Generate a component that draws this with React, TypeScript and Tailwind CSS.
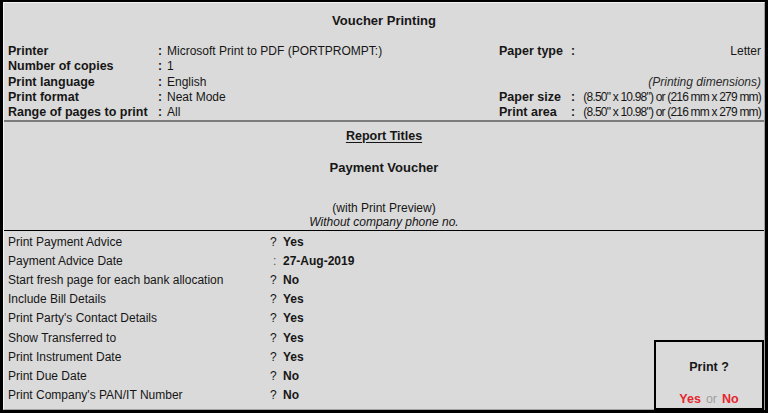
import React from 'react';

const topLeft = [
  { label: 'Printer', value: 'Microsoft Print to PDF (PORTPROMPT:)' },
  { label: 'Number of copies', value: '1' },
  { label: 'Print language', value: 'English' },
  { label: 'Print format', value: 'Neat Mode' },
  { label: 'Range of pages to print', value: 'All' },
];

const options = [
  { label: 'Print Payment Advice', sep: '?', value: 'Yes' },
  { label: 'Payment Advice Date', sep: ':', value: '27-Aug-2019' },
  { label: 'Start fresh page for each bank allocation', sep: '?', value: 'No' },
  { label: 'Include Bill Details', sep: '?', value: 'Yes' },
  { label: "Print Party's Contact Details", sep: '?', value: 'Yes' },
  { label: 'Show Transferred to', sep: '?', value: 'Yes' },
  { label: 'Print Instrument Date', sep: '?', value: 'Yes' },
  { label: 'Print Due Date', sep: '?', value: 'No' },
  { label: "Print Company's PAN/IT Number", sep: '?', value: 'No' },
];

const dims = '(8.50" x 10.98") or (216 mm x 279 mm)';

export default function App() {
  return (
    <div className="relative w-[768px] h-[413px] bg-[#dadada] border-black border-t-2 border-l-[3px] border-r-[3px] border-b-[3px] font-['Liberation_Sans',Arial,sans-serif] text-[#161616] overflow-hidden">
      <div className="h-full border border-[#a2a2a2] border-t-[#f4f4f4] border-l-[#f4f4f4] flex flex-col">
        {/* Printer settings */}
        <div className="h-[119px] shrink-0 border-b-2 border-[#7c7c7c] pt-[10px]">
          <div className="text-center font-bold text-[13px] leading-4">Voucher Printing</div>
          <div className="flex mt-[15px] pl-[4px] pr-[3px]">
            <div className="grid grid-cols-[150px_auto] auto-rows-[15.3px] items-center">
              {topLeft.map((r) => (
                <React.Fragment key={r.label}>
                  <div className="font-bold text-[12.5px] leading-[15px] whitespace-nowrap">{r.label}</div>
                  <div className="text-[12px] leading-[15px] whitespace-nowrap">
                    <span className="font-bold">:</span>
                    <span className="ml-[5px]">{r.value}</span>
                  </div>
                </React.Fragment>
              ))}
            </div>
            <div className="ml-auto w-[262px] grid grid-cols-[72px_1fr] auto-rows-[15.3px] items-center">
              <div className="font-bold text-[12.5px] leading-[15px]">Paper type</div>
              <div className="flex text-[12px] leading-[15px]">
                <span className="font-bold">:</span>
                <span className="ml-auto">Letter</span>
              </div>
              <div className="col-span-2" />
              <div className="col-span-2 text-right italic text-[12px] leading-[15px] text-[#2a2a2a]">(Printing dimensions)</div>
              <div className="font-bold text-[12.5px] leading-[15px]">Paper size</div>
              <div className="flex text-[12px] leading-[15px] whitespace-nowrap">
                <span className="font-bold">:</span>
                <span className="ml-auto tracking-[-0.8px]">{dims}</span>
              </div>
              <div className="font-bold text-[12.5px] leading-[15px]">Print area</div>
              <div className="flex text-[12px] leading-[15px] whitespace-nowrap">
                <span className="font-bold">:</span>
                <span className="ml-auto tracking-[-0.8px]">{dims}</span>
              </div>
            </div>
          </div>
        </div>

        {/* Report titles */}
        <div className="h-[109px] shrink-0 border-b border-black flex flex-col items-center pt-[6px]">
          <div className="font-bold text-[12.5px] leading-4 underline underline-offset-2">Report Titles</div>
          <div className="font-bold text-[13px] leading-4 mt-[16px]">Payment Voucher</div>
          <div className="text-[12px] leading-[14px] mt-[25px]">(with Print Preview)</div>
          <div className="italic text-[12px] leading-[14px]">Without company phone no.</div>
        </div>

        {/* Options */}
        <div className="pt-[2px] pl-[4px] grid grid-cols-[262px_auto] auto-rows-[19.1px] items-center text-[12px] leading-[15px]">
          {options.map((o) => (
            <React.Fragment key={o.label}>
              <div className="whitespace-nowrap">{o.label}</div>
              <div className="whitespace-nowrap">
                <span className={o.sep === ':' ? 'inline-block w-[13px] pl-[3px] text-[#555]' : 'inline-block w-[13px]'}>{o.sep}</span>
                <span className="font-bold">{o.value}</span>
              </div>
            </React.Fragment>
          ))}
        </div>
      </div>

      {/* Confirmation box */}
      <div className="absolute right-[1px] bottom-0 w-[110px] h-[70px] bg-[#dadada] border-2 border-black flex flex-col items-center">
        <div className="font-bold text-[12.5px] leading-4 mt-[17px]">Print ?</div>
        <div className="mt-auto mb-[1px] text-[12.5px] leading-4 font-bold">
          <span className="text-[#e5262e]">Yes</span>
          <span className="font-normal text-[#a0a0a0] mx-[5px]">or</span>
          <span className="text-[#e5262e]">No</span>
        </div>
      </div>
    </div>
  );
}
